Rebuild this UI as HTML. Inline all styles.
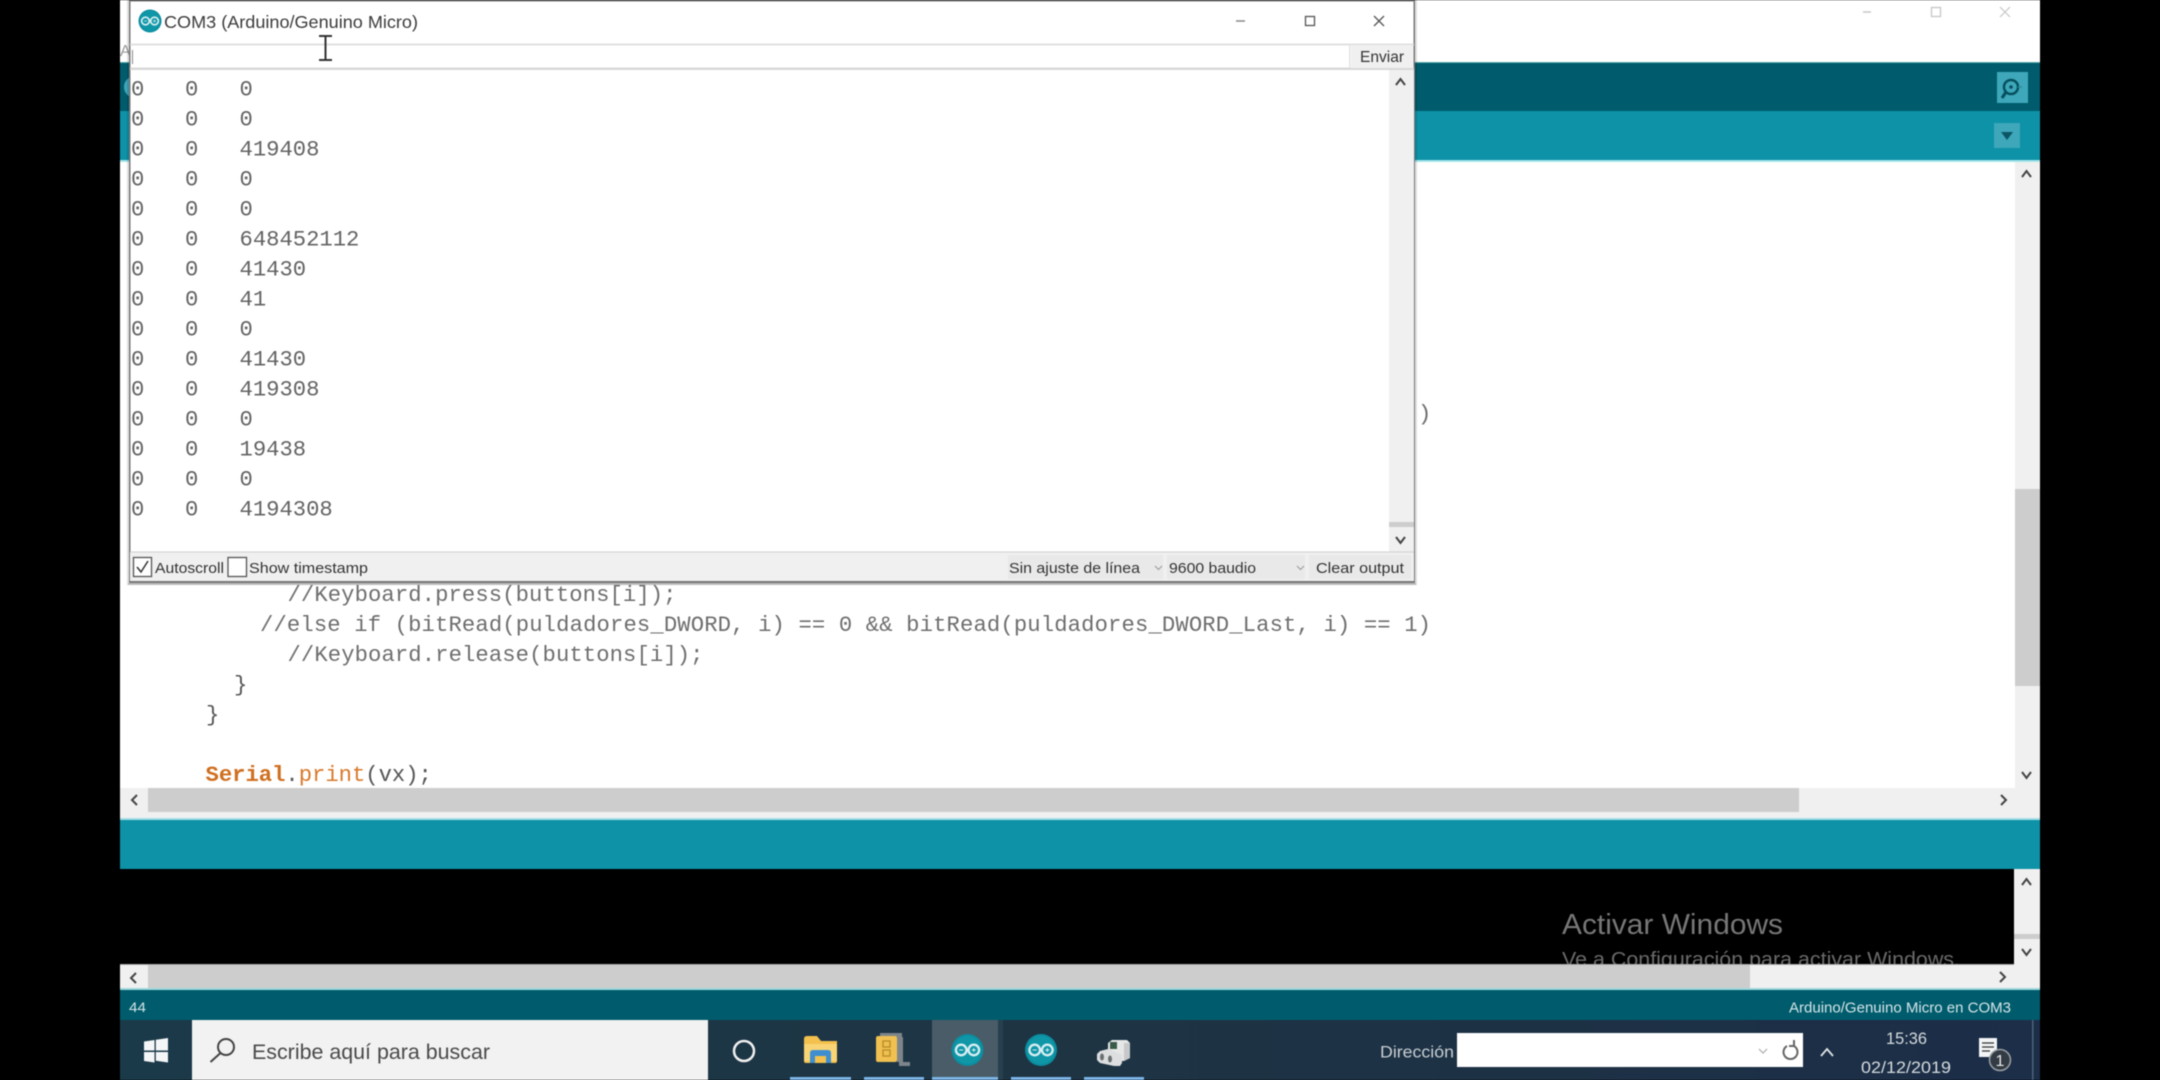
<!DOCTYPE html>
<html><head><meta charset="utf-8"><title>COM3</title>
<style>
html,body{margin:0;padding:0;background:#000;width:2160px;height:1080px;overflow:hidden}
svg{display:block;filter:blur(.55px)}
.s{font-family:"Liberation Sans",sans-serif}
.m{font-family:"Liberation Mono",monospace;font-size:22.2px}
.d{fill:#636363}
.c{fill:#6e6e6e}
</style></head><body>
<svg width="2160" height="1080" viewBox="0 0 2160 1080" xmlns="http://www.w3.org/2000/svg">
<defs>
<clipPath id="ac"><rect x="1500" y="930" width="500" height="34"/></clipPath>
<linearGradient id="tb" x1="0" x2="1" y1="0" y2="0"><stop offset="0" stop-color="#1b3a49"/><stop offset=".5" stop-color="#1e3443"/><stop offset="1" stop-color="#1c2e48"/></linearGradient>
<g id="ard"><circle r="16" fill="#0a8ea0"/><circle r="14" fill="#0f97a8"/><circle cx="-6.300" r="5.300" fill="none" stroke="#d8eef2" stroke-width="2.300"/><circle cx="6.300" r="5.300" fill="none" stroke="#d8eef2" stroke-width="2.300"/><path d="M-8.300 0h4M4.300 0h4M6.300-2v4" stroke="#d8eef2" stroke-width="1"/></g>
</defs>

<rect width="2160" height="1080" fill="#000"/>
<!-- main window -->
<rect x="120" y="0" width="1920" height="964" fill="#fff"/>
<rect x="120" y="63" width="1920" height="48" fill="#005c6c"/>
<rect x="120" y="111" width="1920" height="49" fill="#0d92a7"/>
<rect x="120" y="160" width="1920" height="2" fill="#a5e4ea"/>
<rect x="120" y="62" width="1920" height="1" fill="#5aa"/>
<circle cx="135" cy="87" r="11" fill="#3ea7ba"/>
<text class="s" x="120" y="56" font-size="16" fill="#999">A</text>
<rect x="1997" y="72" width="31" height="31" fill="#3ea7ba"/>
<circle cx="2011" cy="87" r="7" fill="none" stroke="#05505e" stroke-width="2.500"/><circle cx="2011" cy="87" r="1.800" fill="#05505e"/><path d="M2006 92L2002 98" stroke="#05505e" stroke-width="3"/><path d="M2018 87h4" stroke="#2d8d9e" stroke-width="1.500"/>
<rect x="1994" y="123" width="26" height="25" fill="#3ea7ba"/>
<path d="M2001 132h12l-6 8z" fill="#0b5566"/>
<!-- main window controls -->
<path d="M1863 12h8" stroke="#c6c6c6" stroke-width="1.500"/>
<rect x="1931.500" y="7.500" width="9" height="9" fill="none" stroke="#c6c6c6" stroke-width="1.300"/>
<path d="M2000 7l10 10M2010 7l-10 10" stroke="#c6c6c6" stroke-width="1.200"/>

<!-- main editor scrollbars -->
<rect x="2015" y="162" width="25" height="626" fill="#f0f0f0"/>
<rect x="2015" y="489" width="25" height="197" fill="#cdcdcd"/>
<path d="M2022 177l4.500-6 4.500 6" fill="none" stroke="#444" stroke-width="2"/>
<path d="M2022 772l4.500 6 4.500-6" fill="none" stroke="#444" stroke-width="2"/>
<rect x="120" y="788" width="1920" height="30" fill="#f0f0f0"/>
<rect x="148" y="788" width="1651" height="24" fill="#cdcdcd"/>
<path d="M137 795l-5 5 5 5" fill="none" stroke="#444" stroke-width="2"/>
<path d="M2001 795l5 5-5 5" fill="none" stroke="#444" stroke-width="2"/>

<!-- code -->
<g class="m">
<text x="1418" y="420" class="c">)</text>
<text x="287.500" y="601" class="c" textLength="389">//Keyboard.press(buttons[i]);</text>
<text x="260" y="631" class="c" textLength="1171">//else if (bitRead(puldadores_DWORD, i) == 0 &amp;&amp; bitRead(puldadores_DWORD_Last, i) == 1)</text>
<text x="287.500" y="661" class="c" textLength="416">//Keyboard.release(buttons[i]);</text>
<text x="234" y="691" fill="#555">}</text>
<text x="206" y="721" fill="#555">}</text>
<text x="205.500" y="781"><tspan fill="#cf6f1f" font-weight="bold">Serial</tspan><tspan fill="#555">.</tspan><tspan fill="#d9792a">print</tspan><tspan fill="#555">(vx);</tspan></text>
</g>

<!-- teal bottom + console -->
<rect x="120" y="818" width="1920" height="2" fill="#a5dfe5"/>
<rect x="120" y="820" width="1920" height="49" fill="#0d92a7"/>
<rect x="120" y="869" width="1894" height="95" fill="#000"/>
<rect x="2014" y="869" width="26" height="96" fill="#f0f0f0"/>
<rect x="2014" y="934" width="26" height="5" fill="#cdcdcd"/>
<path d="M2022 885l4.500-6 4.500 6" fill="none" stroke="#444" stroke-width="2"/>
<path d="M2022 949l4.500 6 4.500-6" fill="none" stroke="#444" stroke-width="2"/>
<text class="s" x="1562" y="934" font-size="29" fill="#777" textLength="221" lengthAdjust="spacingAndGlyphs">Activar Windows</text>
<g clip-path="url(#ac)"><text class="s" x="1562" y="966" font-size="20.500" fill="#6a6a6a" textLength="398" lengthAdjust="spacingAndGlyphs">Ve a Configuración para activar Windows.</text></g>
<rect x="120" y="964" width="1894" height="1.500" fill="#aaa"/>
<rect x="120" y="965" width="1920" height="24" fill="#f0f0f0"/>
<rect x="148" y="965" width="1602" height="23" fill="#cdcdcd"/>
<path d="M136 973l-5 5 5 5" fill="none" stroke="#444" stroke-width="2"/>
<path d="M2000 972l5 5-5 5" fill="none" stroke="#444" stroke-width="2"/>
<rect x="120" y="988" width="1920" height="2" fill="#9fd8df"/>
<rect x="120" y="990" width="1920" height="30" fill="#005c6c"/>
<text class="s" x="129" y="1012" font-size="14" fill="#cfe2e6" textLength="17" lengthAdjust="spacingAndGlyphs">44</text>
<text class="s" x="1789" y="1012.500" font-size="14.500" fill="#d4e4e8" textLength="222" lengthAdjust="spacingAndGlyphs">Arduino/Genuino Micro en COM3</text>

<!-- taskbar -->
<rect x="120" y="1020" width="1920" height="60" fill="url(#tb)"/>
<path d="M144 1041.500l10.500-1.500v10.500h-10.500zM155.800 1039.800l12.200-1.800v12.500h-12.200zM144 1052h10.500v10.500l-10.500-1.500zM155.800 1052h12.200v10.500l-12.200-1.800z" fill="#f4f6f7"/>
<rect x="192" y="1020" width="516" height="60" fill="#f2f2f2"/>
<circle cx="226" cy="1047" r="8" fill="none" stroke="#444" stroke-width="2"/>
<path d="M220.500 1053L210.500 1062" stroke="#444" stroke-width="2"/>
<text class="s" x="252" y="1059" font-size="21" fill="#4a4a4a" textLength="238" lengthAdjust="spacingAndGlyphs">Escribe aquí para buscar</text>
<circle cx="744" cy="1051" r="10" fill="none" stroke="#f0f0f0" stroke-width="2.500"/>

<!-- explorer -->
<path d="M804 1039q0-3 3-3h10l4 5h16v20q0 2-2 2h-29q-2 0-2-2z" fill="#f4c04e"/>
<rect x="804" y="1044" width="33" height="17" fill="#f9d474"/>
<path d="M810 1063v-10q0-3 3-3h15q3 0 3 3v10h-5v-7h-11v7z" fill="#3f8fd0"/>
<rect x="815" y="1056" width="11" height="7" fill="#f4c04e"/>
<!-- archive -->
<path d="M880 1033h22v4h-22zM897 1037h6v25h-6zM899 1062h11v4h-11z" fill="#7d858a"/>
<rect x="876" y="1036" width="21" height="26" rx="2" fill="#f0c050"/>
<path d="M883 1041h7v6h-7zM883 1050h7v6h-7z" fill="none" stroke="#b58a2a" stroke-width="1.300"/>
<!-- arduino -->
<rect x="932" y="1020" width="66" height="60" fill="#4a5c67"/>
<rect x="998" y="1020" width="5" height="60" fill="#27404e"/>
<use href="#ard" x="967.500" y="1050"/>
<use href="#ard" x="1041" y="1050"/>
<!-- board icon -->
<path d="M1108 1043l4-3h15l3 3v15l-6 3h-16z" fill="#e6e7e7"/>
<path d="M1124 1043h6v15l-6 3z" fill="#c6c8c9"/>
<rect x="1110" y="1042" width="7" height="7" fill="#3a5a48"/>
<path d="M1100 1051l8-2 14 6v8l-2 3h-6l-14-3-3-3v-6z" fill="#dcdedf"/>
<ellipse cx="1102" cy="1057" rx="2" ry="3.500" fill="#6a6f72"/>
<ellipse cx="1110" cy="1059" rx="2" ry="3.500" fill="#6a6f72"/>
<!-- underlines -->
<g fill="#7db6e8"><rect x="790" y="1077" width="61" height="3"/><rect x="864" y="1077" width="60" height="3"/><rect x="932" y="1077" width="66" height="3"/><rect x="1011" y="1077" width="60" height="3"/><rect x="1084" y="1077" width="60" height="3"/></g>

<text class="s" x="1380" y="1057.500" font-size="17" fill="#c9ced2" textLength="74" lengthAdjust="spacingAndGlyphs">Dirección</text>
<rect x="1457" y="1033" width="346" height="34" fill="#fff"/>
<path d="M1759 1049l4 4 4-4" fill="none" stroke="#aaa" stroke-width="1.200"/>
<path d="M1787 1046a7 7 0 1 0 7 0M1794 1040v6h-5" fill="none" stroke="#666" stroke-width="2"/>
<path d="M1821 1056l6-7 6 7" fill="none" stroke="#e0e4e6" stroke-width="1.800"/>
<text class="s" x="1886" y="1044" font-size="17" fill="#d5dadd" textLength="41" lengthAdjust="spacingAndGlyphs">15:36</text>
<text class="s" x="1861" y="1073" font-size="17" fill="#d5dadd" textLength="90" lengthAdjust="spacingAndGlyphs">02/12/2019</text>
<path d="M1979 1038h18v14l-5 5h-13z" fill="#f2f4f5"/>
<path d="M1982 1043h12M1982 1047h12M1982 1051h8" stroke="#333" stroke-width="1.300"/>
<circle cx="2000" cy="1060" r="10.500" fill="#333c44" stroke="#9aa0a5" stroke-width="1.500"/>
<text class="s" x="2000" y="1066" font-size="16" fill="#e8e8e8" text-anchor="middle">1</text>
<rect x="2032" y="1020" width="1.500" height="60" fill="#4b6278"/>

<!-- serial monitor window -->
<rect x="127" y="0" width="1290" height="585" fill="#000" opacity=".12"/>
<rect x="129" y="0" width="1286" height="582" fill="#fff"/>
<rect x="129" y="0" width="1286" height="1.500" fill="#777"/>
<rect x="129" y="0" width="1.500" height="582" fill="#777"/>
<rect x="1413.500" y="0" width="1.500" height="582" fill="#777"/>
<use href="#ard" transform="translate(150 21) scale(.72)"/>
<text class="s" x="164" y="28" font-size="17.500" fill="#3c3c3c" textLength="254" lengthAdjust="spacingAndGlyphs">COM3 (Arduino/Genuino Micro)</text>
<path d="M1236 21h9" stroke="#888" stroke-width="1.500"/>
<rect x="1305.500" y="16.500" width="9" height="9" fill="none" stroke="#555" stroke-width="1.300"/>
<path d="M1374 16l10 10M1384 16l-10 10" stroke="#555" stroke-width="1.300"/>
<rect x="130" y="43.500" width="1284" height="2" fill="#e0e0e0"/>
<rect x="130" y="67.500" width="1284" height="2.500" fill="#d8d8d8"/>
<rect x="1349" y="45" width="1.500" height="23" fill="#e4e4e4"/>
<rect x="1351" y="45" width="62" height="23" fill="#f0f0f0"/>
<text class="s" x="1360" y="62" font-size="15.500" fill="#333" textLength="44" lengthAdjust="spacingAndGlyphs">Enviar</text>
<rect x="132" y="50" width="1" height="14" fill="#888"/>
<path d="M319 36h13M325.500 36v24M319 60h13" fill="none" stroke="#333" stroke-width="2"/>

<g class="m d">
<text x="131" y="95.500">0</text><text x="185" y="95.500">0</text><text x="239.500" y="95.500">0</text>
<text x="131" y="125.500">0</text><text x="185" y="125.500">0</text><text x="239.500" y="125.500">0</text>
<text x="131" y="155.500">0</text><text x="185" y="155.500">0</text><text x="239.500" y="155.500">419408</text>
<text x="131" y="185.500">0</text><text x="185" y="185.500">0</text><text x="239.500" y="185.500">0</text>
<text x="131" y="215.500">0</text><text x="185" y="215.500">0</text><text x="239.500" y="215.500">0</text>
<text x="131" y="245.500">0</text><text x="185" y="245.500">0</text><text x="239.500" y="245.500">648452112</text>
<text x="131" y="275.500">0</text><text x="185" y="275.500">0</text><text x="239.500" y="275.500">41430</text>
<text x="131" y="305.500">0</text><text x="185" y="305.500">0</text><text x="239.500" y="305.500">41</text>
<text x="131" y="335.500">0</text><text x="185" y="335.500">0</text><text x="239.500" y="335.500">0</text>
<text x="131" y="365.500">0</text><text x="185" y="365.500">0</text><text x="239.500" y="365.500">41430</text>
<text x="131" y="395.500">0</text><text x="185" y="395.500">0</text><text x="239.500" y="395.500">419308</text>
<text x="131" y="425.500">0</text><text x="185" y="425.500">0</text><text x="239.500" y="425.500">0</text>
<text x="131" y="455.500">0</text><text x="185" y="455.500">0</text><text x="239.500" y="455.500">19438</text>
<text x="131" y="485.500">0</text><text x="185" y="485.500">0</text><text x="239.500" y="485.500">0</text>
<text x="131" y="515.500">0</text><text x="185" y="515.500">0</text><text x="239.500" y="515.500">4194308</text>
</g>

<rect x="1389" y="70" width="25" height="482" fill="#f0f0f0"/>
<rect x="1389" y="522" width="25" height="5" fill="#cdcdcd"/>
<path d="M1396 85l4.500-6 4.500 6" fill="none" stroke="#444" stroke-width="2"/>
<path d="M1396 537l4.500 6 4.500-6" fill="none" stroke="#444" stroke-width="2"/>
<rect x="130" y="552" width="1284" height="29" fill="#f0f0f0"/>
<rect x="130" y="551.500" width="1284" height="1" fill="#d0d0d0"/>
<rect x="133.500" y="557.500" width="18" height="19" fill="#fff" stroke="#555" stroke-width="1.300"/>
<path d="M137 567l4 5 7-11" fill="none" stroke="#333" stroke-width="1.500"/>
<text class="s" x="155" y="573" font-size="15" fill="#333" textLength="69" lengthAdjust="spacingAndGlyphs">Autoscroll</text>
<rect x="228" y="557.500" width="18.500" height="19" fill="#fff" stroke="#555" stroke-width="1.300"/>
<text class="s" x="249" y="573" font-size="15" fill="#333" textLength="119" lengthAdjust="spacingAndGlyphs">Show timestamp</text>
<rect x="1008" y="555" width="155" height="24" fill="#e9e9e9"/>
<rect x="1167" y="555" width="138" height="24" fill="#e9e9e9"/>
<rect x="1309" y="555" width="102" height="24" fill="#e9e9e9"/>
<text class="s" x="1009" y="573" font-size="15" fill="#333" textLength="131" lengthAdjust="spacingAndGlyphs">Sin ajuste de línea</text>
<path d="M1155 566l3.500 3.500 3.500-3.500" fill="none" stroke="#999" stroke-width="1"/>
<text class="s" x="1169" y="573" font-size="15" fill="#333" textLength="87" lengthAdjust="spacingAndGlyphs">9600 baudio</text>
<path d="M1297 566l3.500 3.500 3.500-3.500" fill="none" stroke="#999" stroke-width="1"/>
<text class="s" x="1316" y="573" font-size="15" fill="#333" textLength="88" lengthAdjust="spacingAndGlyphs">Clear output</text>
<rect x="129" y="581" width="1286" height="2" fill="#777"/>
<rect x="128" y="583" width="1288" height="2" fill="#bbb"/>
</svg>
</body></html>
